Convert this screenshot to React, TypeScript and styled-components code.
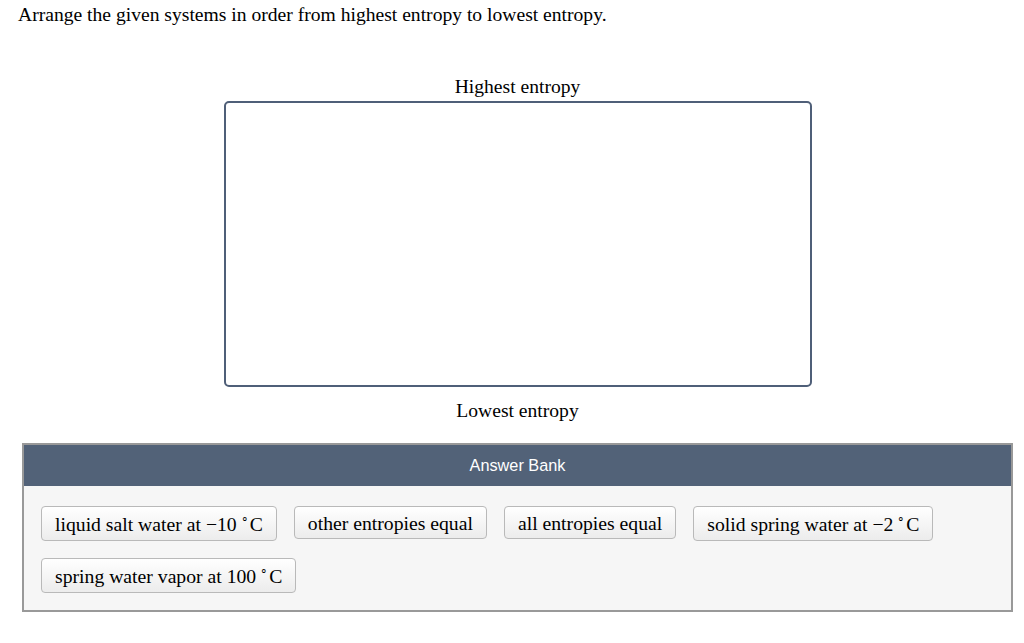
import React from "react";
import styled, { createGlobalStyle } from "styled-components";

const Global = createGlobalStyle`
  html, body { margin: 0; padding: 0; background: #ffffff; }
  body { font-family: "Liberation Serif", "Times New Roman", serif; color: #000; }
`;

const Page = styled.div`
  width: 1024px;
  box-sizing: border-box;
  padding: 4px 11px 0 22px;
`;

const Title = styled.div`
  font-size: 19.6px;
  line-height: 22px;
  margin-left: -4px;
`;

const Sorter = styled.div`
  display: flex;
  flex-direction: column;
  align-items: center;
  margin-top: 50px;
`;

const Label = styled.div<{ $below?: boolean }>`
  font-size: 19.6px;
  line-height: 22px;
  margin: ${(p) => (p.$below ? "13px 0 21px" : "0 0 3px")};
`;

const DropBox = styled.div`
  width: 588px;
  height: 286px;
  box-sizing: border-box;
  border: 2px solid #4f5f78;
  border-radius: 5px;
  background: #ffffff;
`;

const Bank = styled.div`
  border: 2px solid #999999;
  background: #f6f6f6;
`;

const BankHeader = styled.div`
  height: 41px;
  background: #526278;
  color: #ffffff;
  font-family: "Liberation Sans", Arial, sans-serif;
  font-size: 16.3px;
  display: flex;
  align-items: center;
  justify-content: center;
`;

const Items = styled.div`
  display: flex;
  flex-wrap: wrap;
  align-items: flex-start;
  gap: 17px;
  padding: 20px 17px 17px;
`;

const Chip = styled.div<{ $math?: boolean }>`
  box-sizing: border-box;
  border: 1px solid #b9b9b9;
  border-radius: 4px;
  background: linear-gradient(#ffffff, #ececec);
  font-size: 19.7px;
  line-height: 22px;
  padding: ${(p) => (p.$math ? "6px 13px 5px 13px" : "5px 13px 4px 13px")};
  white-space: nowrap;
`;

const Deg = styled.span`
  display: inline-block;
  font-size: 12px;
  line-height: 11px;
  vertical-align: 8px;
  margin: 0 1px 0 4px;
`;

type Item = { pre: string; deg: boolean };

const items: Item[] = [
  { pre: "liquid salt water at \u221210", deg: true },
  { pre: "other entropies equal", deg: false },
  { pre: "all entropies equal", deg: false },
  { pre: "solid spring water at \u22122", deg: true },
  { pre: "spring water vapor at 100", deg: true },
];

export default function App() {
  return (
    <>
      <Global />
      <Page>
        <Title>Arrange the given systems in order from highest entropy to lowest entropy.</Title>
        <Sorter>
          <Label>Highest entropy</Label>
          <DropBox />
          <Label $below>Lowest entropy</Label>
        </Sorter>
        <Bank>
          <BankHeader>Answer Bank</BankHeader>
          <Items>
            {items.map((it) => (
              <Chip key={it.pre} $math={it.deg}>
                {it.pre}
                {it.deg && (
                  <>
                    <Deg>{"\u2218"}</Deg>C
                  </>
                )}
              </Chip>
            ))}
          </Items>
        </Bank>
      </Page>
    </>
  );
}
